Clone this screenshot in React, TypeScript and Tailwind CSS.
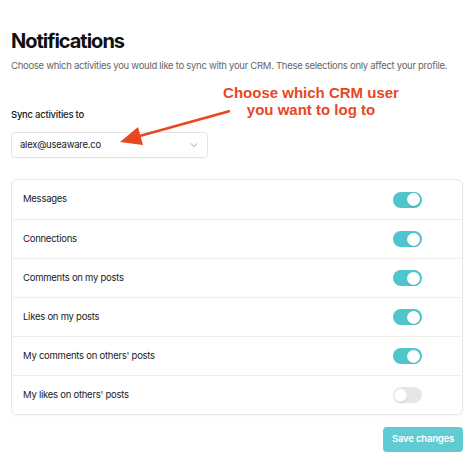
import React from "react";

const rows: { label: string; on: boolean }[] = [
  { label: "Messages", on: true },
  { label: "Connections", on: true },
  { label: "Comments on my posts", on: true },
  { label: "Likes on my posts", on: true },
  { label: "My comments on others' posts", on: true },
  { label: "My likes on others' posts", on: false },
];

function Toggle({ on }: { on: boolean }) {
  return (
    <div
      className={
        on
          ? "w-[29px] h-[16px] rounded-full bg-[#4fc5cc] flex items-center justify-end px-[2px]"
          : "w-[29px] h-[16px] rounded-full bg-[#e6e6e6] flex items-center justify-start px-[1px]"
      }
    >
      <div className="w-[13px] h-[13px] rounded-full bg-white shadow-[0_1px_1px_rgba(0,0,0,0.15)]" />
    </div>
  );
}

export default function App() {
  return (
    <div className="w-[474px] h-[464px] bg-white relative font-['Inter',sans-serif] text-[#1f1f1f] overflow-hidden">
      <div className="px-[11px] pt-[29px]">
        <h1 className="text-[20px] leading-[24px] font-bold tracking-[-1px] text-[#111]">Notifications</h1>
        <p className="mt-[6px] text-[9.5px] leading-[14px] text-[#666] whitespace-nowrap tracking-[-0.28px]">
          Choose which activities you would like to sync with your CRM. These selections only affect your profile.
        </p>
        <div className="mt-[35px] text-[9.5px] leading-[14px] font-medium text-[#1a1a1a] tracking-[-0.25px]">Sync activities to</div>
        <div className="mt-[10px] w-[197px] h-[26px] border border-[#e4e4e4] rounded-[4px] flex items-center justify-between pl-[8px] pr-[9px] shadow-[0_1px_1px_rgba(0,0,0,0.03)]">
          <span className="text-[9.5px] text-[#1a1a1a] tracking-[-0.25px]">alex@useaware.co</span>
          <svg width="8" height="6" viewBox="0 0 8 6" fill="none">
            <path d="M1 1.5 L4 4.5 L7 1.5" stroke="#9a9a9a" strokeWidth="1" />
          </svg>
        </div>
        <div className="mt-[21px] w-[452px] border border-[#e6e6e6] rounded-[6px] shadow-[0_1px_2px_rgba(0,0,0,0.04)]">
          {rows.map((r, i) => (
            <div
              key={r.label}
              className={
                i === 0
                  ? "h-[39px] flex items-center justify-between pl-[11px] pr-[40px]"
                  : "h-[39px] flex items-center justify-between pl-[11px] pr-[40px] border-t border-[#eeeeee]"
              }
            >
              <span className="text-[9.5px] text-[#1a1a1a] tracking-[-0.25px]">{r.label}</span>
              <Toggle on={r.on} />
            </div>
          ))}
        </div>
        <div className="mt-[12px] flex justify-end w-[452px]">
          <button className="w-[80px] h-[25px] rounded-[4px] bg-[#60cbd3] text-white text-[9.5px] font-semibold tracking-[-0.2px]">
            Save changes
          </button>
        </div>
      </div>

      <div className="absolute left-[206px] top-[84px] w-[210px] text-center text-[#e8471f] font-bold text-[15px] leading-[17px] font-['Liberation_Sans',sans-serif]">
        Choose which CRM user
        <br />
        you want to log to
      </div>
      <svg className="absolute left-0 top-0" width="474" height="464" viewBox="0 0 474 464">
        <line x1="230" y1="111" x2="136" y2="137" stroke="#e8471f" strokeWidth="2.5" />
        <polygon points="120,142 138,127 143,145" fill="#e8471f" />
      </svg>
    </div>
  );
}
